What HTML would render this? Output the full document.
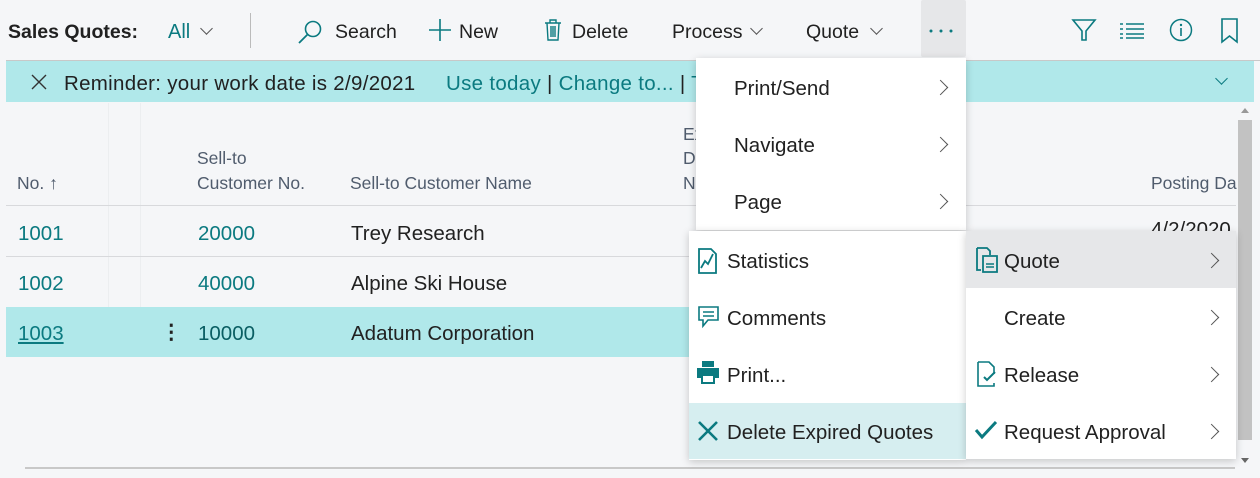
<!DOCTYPE html>
<html><head><meta charset="utf-8"><style>
*{margin:0;padding:0;box-sizing:border-box}
body{width:1260px;height:478px;background:#f5f6f8;font-family:"Liberation Sans",sans-serif;color:#212121;position:relative;overflow:hidden;font-size:20.5px}
.a{position:absolute;white-space:nowrap}
.tb{font-size:19.5px}
.t{color:#0b7a80}
.h{color:#505c6d;font-size:17.5px}
.menu{position:absolute;background:#fff;box-shadow:0 2px 8px rgba(0,0,0,.2)}
.chev{position:absolute;width:11px;height:11px;border-right:1.3px solid #555;border-top:1.3px solid #555;transform:rotate(45deg)}
.dn{position:absolute;width:9px;height:9px;border-right:1.3px solid #555;border-bottom:1.3px solid #555;transform:rotate(45deg)}
svg{position:absolute}
</style></head><body>
<!-- toolbar -->
<div class="a" style="left:8px;top:21px;font-weight:bold;font-size:19.5px">Sales Quotes:</div>
<div class="a t" style="left:168px;top:21px;font-size:20px">All</div>
<div class="dn" style="left:202px;top:24px"></div>
<div class="a" style="left:250px;top:13px;width:1px;height:35px;background:#bbb"></div>
<svg style="left:297px;top:19px" width="26" height="26" viewBox="0 0 26 26"><circle cx="16" cy="10" r="7.5" fill="none" stroke="#0b7a80" stroke-width="1.6"/><path d="M10.5 15.5L2 24" stroke="#0b7a80" stroke-width="1.8"/></svg>
<div class="a tb" style="left:335px;top:21px">Search</div>
<svg style="left:428px;top:18px" width="24" height="24"><path d="M12 1v22M1 12h22" stroke="#0b7a80" stroke-width="1.6"/></svg>
<div class="a tb" style="left:459px;top:21px">New</div>
<svg style="left:543px;top:18px" width="20" height="24" viewBox="0 0 20 24"><path d="M2 5h16M7 5V2h6v3M4 5l1 17h10l1-17M8 8v11M10 8v11M12 8v11" fill="none" stroke="#0b7a80" stroke-width="1.4"/></svg>
<div class="a tb" style="left:572px;top:21px">Delete</div>
<div class="a tb" style="left:672px;top:21px">Process</div>
<div class="dn" style="left:752px;top:24px"></div>
<div class="a tb" style="left:806px;top:21px">Quote</div>
<div class="dn" style="left:872px;top:24px"></div>
<div class="a" style="left:921px;top:0;width:45px;height:57px;background:#e6e7e9;border-radius:2px"></div>
<svg style="left:929px;top:29px" width="28" height="4"><circle cx="2" cy="2" r="1.5" fill="#0b7a80"/><circle cx="12" cy="2" r="1.5" fill="#0b7a80"/><circle cx="22" cy="2" r="1.5" fill="#0b7a80"/></svg>
<svg style="left:1071px;top:18px" width="26" height="24" viewBox="0 0 26 24"><path d="M2 2h22l-9 11v9h-4v-9z" fill="none" stroke="#0b7a80" stroke-width="1.6"/></svg>
<svg style="left:1120px;top:22px" width="24" height="18"><path d="M0 2h3M6 2h18M0 7h3M6 7h18M0 12h3M6 12h18M0 16h3M6 16h18" stroke="#0b7a80" stroke-width="1.5"/></svg>
<svg style="left:1169px;top:18px" width="24" height="24"><circle cx="12" cy="12" r="10.5" fill="none" stroke="#0b7a80" stroke-width="1.5"/><path d="M12 10v8" stroke="#0b7a80" stroke-width="1.6"/><circle cx="12" cy="7" r="1.2" fill="#0b7a80"/></svg>
<svg style="left:1220px;top:18px" width="20" height="26"><path d="M2 1h15v23l-7.5-6L2 24z" fill="none" stroke="#0b7a80" stroke-width="1.6"/></svg>
<div class="a" style="left:6px;top:60px;width:1254px;height:1px;background:#c8c8c8"></div>
<!-- banner -->
<div class="a" style="left:6px;top:61px;width:1248px;height:41px;background:#b0e8ea"></div>
<svg style="left:31px;top:74px" width="16" height="16"><path d="M1 1l14 14M15 1L1 15" stroke="#333" stroke-width="1.4"/></svg>
<div class="a" style="left:64px;top:72px;letter-spacing:0.3px">Reminder: your work date is 2/9/2021</div>
<div class="a" style="left:446px;top:72px;letter-spacing:0.3px"><span class="t">Use today</span> | <span class="t">Change to...</span> | <span class="t">T</span></div>
<div class="dn" style="left:1217px;top:74px;border-color:#0b7a80"></div>
<!-- header -->
<div class="a" style="left:108px;top:103px;width:1px;height:254px;background:#eceef0"></div>
<div class="a" style="left:140px;top:103px;width:1px;height:254px;background:#eceef0"></div>
<div class="a h" style="left:17px;top:173px">No. ↑</div>
<div class="a h" style="left:197px;top:148px">Sell-to</div>
<div class="a h" style="left:197px;top:173px">Customer No.</div>
<div class="a h" style="left:350px;top:173px">Sell-to Customer Name</div>
<div class="a h" style="left:683px;top:124px">Ex</div>
<div class="a h" style="left:683px;top:148px">D</div>
<div class="a h" style="left:683px;top:173px">N</div>
<div class="a h" style="left:1151px;top:173px">Posting Da</div>
<div class="a" style="left:6px;top:205px;width:1230px;height:1px;background:#d8d9dc"></div>
<div class="a" style="left:6px;top:256px;width:1230px;height:1px;background:#d8d9dc"></div>
<div class="a" style="left:6px;top:307px;width:1230px;height:50px;background:#b0e8ea"></div>
<div class="a t" style="left:18px;top:222px">1001</div><div class="a t" style="left:198px;top:222px">20000</div><div class="a" style="left:351px;top:222px">Trey Research</div>
<div class="a" style="left:1151px;top:218px">4/2/2020</div>
<div class="a t" style="left:18px;top:272px">1002</div><div class="a t" style="left:198px;top:272px">40000</div><div class="a" style="left:351px;top:272px">Alpine Ski House</div>
<div class="a t" style="left:18px;top:322px;text-decoration:underline">1003</div>
<div class="a" style="left:161px;top:320px;font-weight:bold">⋮</div>
<div class="a t" style="left:198px;top:322px;color:#0a5e63">10000</div><div class="a" style="left:351px;top:322px">Adatum Corporation</div>
<!-- scrollbars -->
<div class="a" style="left:25px;top:467px;width:1210px;height:2px;background:#c8c8c8"></div>
<div class="a" style="left:1238px;top:120px;width:14px;height:320px;background:#c2c2c2"></div>
<div class="a" style="left:1241px;top:108px;border:4px solid transparent;border-bottom:5px solid #999;border-top:0"></div>
<div class="a" style="left:1241px;top:458px;border:4px solid transparent;border-top:5px solid #666;border-bottom:0"></div>
<!-- menu1 -->
<div class="menu" style="left:696px;top:58px;width:270px;height:172px"></div>
<div class="a" style="left:734px;top:77px">Print/Send</div><div class="chev" style="left:935px;top:82px"></div>
<div class="a" style="left:734px;top:134px">Navigate</div><div class="chev" style="left:935px;top:139px"></div>
<div class="a" style="left:734px;top:191px">Page</div><div class="chev" style="left:935px;top:196px"></div>
<!-- menu2 -->
<div class="menu" style="left:689px;top:231px;width:277px;height:229px"></div>
<div class="a" style="left:689px;top:403px;width:277px;height:56px;background:#d6eef0"></div>
<svg style="left:698px;top:248px" width="20" height="26" viewBox="0 0 20 26"><path d="M1 1h12l5 5v19H1z" fill="none" stroke="#0b7a80" stroke-width="1.8"/><path d="M3 20l4-7 3 3 5-10" fill="none" stroke="#0b7a80" stroke-width="1.8"/></svg>
<div class="a" style="left:727px;top:250px">Statistics</div>
<svg style="left:697px;top:305px" width="24" height="24" viewBox="0 0 24 24"><path d="M2 2h19v13H11l-5 6v-6H2z" fill="none" stroke="#0b7a80" stroke-width="1.6"/><path d="M6 7h11M6 11h11" stroke="#0b7a80" stroke-width="1.4"/></svg>
<div class="a" style="left:727px;top:307px">Comments</div>
<svg style="left:696px;top:360px" width="24" height="24" viewBox="0 0 24 24"><path d="M6 1h12v6H6z" fill="#0b7a80"/><path d="M1 8h22v10h-4v-4H5v4H1z" fill="#0b7a80"/><path d="M6 15h12v8H6z" fill="none" stroke="#0b7a80" stroke-width="2"/></svg>
<div class="a" style="left:727px;top:364px">Print...</div>
<svg style="left:697px;top:420px" width="22" height="22"><path d="M2 2l18 18M20 2L2 20" stroke="#0b7a80" stroke-width="2.6"/></svg>
<div class="a" style="left:727px;top:421px">Delete Expired Quotes</div>
<!-- menu3 -->
<div class="menu" style="left:966px;top:231px;width:270px;height:228px"></div>
<div class="a" style="left:966px;top:231px;width:270px;height:57px;background:#e6e7e9"></div>
<svg style="left:975px;top:246px" width="24" height="28" viewBox="0 0 24 28"><path d="M2 2h10l3 3v4M2 2v22h4" fill="none" stroke="#0b7a80" stroke-width="1.8"/><path d="M8 10h14v16H8z" fill="none" stroke="#0b7a80" stroke-width="1.8"/><path d="M11 18h8M11 21h8" stroke="#0b7a80" stroke-width="1.6"/></svg>
<div class="a" style="left:1004px;top:250px">Quote</div><div class="chev" style="left:1206px;top:255px"></div>
<div class="a" style="left:1004px;top:307px">Create</div><div class="chev" style="left:1206px;top:312px"></div>
<svg style="left:976px;top:360px" width="22" height="28" viewBox="0 0 22 28"><path d="M2 2h11l5 5v7M2 2v24h16v-3" fill="none" stroke="#0b7a80" stroke-width="1.6"/><path d="M8 17l3 3 8-8" fill="none" stroke="#0b7a80" stroke-width="2"/></svg>
<div class="a" style="left:1004px;top:364px">Release</div><div class="chev" style="left:1206px;top:369px"></div>
<svg style="left:974px;top:420px" width="24" height="20"><path d="M2 10l6 7L22 2" fill="none" stroke="#0b7a80" stroke-width="3"/></svg>
<div class="a" style="left:1004px;top:421px">Request Approval</div><div class="chev" style="left:1206px;top:426px"></div>
</body></html>
